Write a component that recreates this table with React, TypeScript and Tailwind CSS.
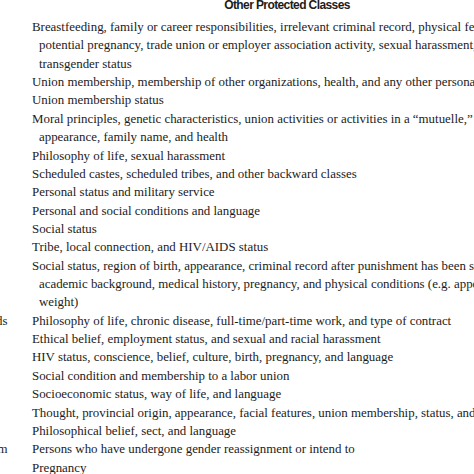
const rows: { country?: string; lines: string[] }[] = [
  { lines: ['Breastfeeding, family or career responsibilities, irrelevant criminal record, physical features,', 'potential pregnancy, trade union or employer association activity, sexual harassment, and', 'transgender status'] },
  { lines: ['Union membership, membership of other organizations, health, and any other personal'] },
  { lines: ['Union membership status'] },
  { lines: ['Moral principles, genetic characteristics, union activities or activities in a \u201cmutuelle,\u201d', 'appearance, family name, and health'] },
  { lines: ['Philosophy of life, sexual harassment'] },
  { lines: ['Scheduled castes, scheduled tribes, and other backward classes'] },
  { lines: ['Personal status and military service'] },
  { lines: ['Personal and social conditions and language'] },
  { lines: ['Social status'] },
  { lines: ['Tribe, local connection, and HIV/AIDS status'] },
  { lines: ['Social status, region of birth, appearance, criminal record after punishment has been served,', 'academic background, medical history, pregnancy, and physical conditions (e.g. appearance,', 'weight)'] },
  { country: 'Netherlands', lines: ['Philosophy of life, chronic disease, full-time/part-time work, and type of contract'] },
  { lines: ['Ethical belief, employment status, and sexual and racial harassment'] },
  { lines: ['HIV status, conscience, belief, culture, birth, pregnancy, and language'] },
  { lines: ['Social condition and membership to a labor union'] },
  { lines: ['Socioeconomic status, way of life, and language'] },
  { lines: ['Thought, provincial origin, appearance, facial features, union membership, status, and wealth'] },
  { lines: ['Philosophical belief, sect, and language'] },
  { country: 'United Kingdom', lines: ['Persons who have undergone gender reassignment or intend to'] },
  { lines: ['Pregnancy'] },
];

export default function App() {
  return (
    <div className="w-[474px] h-[474px] overflow-hidden bg-white text-[#1c1c1c]">
      <div className="flex w-[620px]">
        <div className="w-[7.5px] shrink-0 overflow-hidden">
          <div className="h-[18px]" />
          {rows.map((r, i) => (
            <div key={i} className="flex justify-end" style={{ height: `${r.lines.length * 18.36}px` }}>
              <span className="whitespace-nowrap font-['Liberation_Serif',serif] text-[12.9px] leading-[18.36px]">{r.country ?? ''}</span>
            </div>
          ))}
        </div>
        <div className="ml-[24.5px] w-[510px] shrink-0">
          <div className="h-[18px] text-center font-['Liberation_Sans',sans-serif] font-bold text-[12px] leading-[11px] tracking-[-0.6px]">
            Other Protected Classes
          </div>
          {rows.map((r, i) => (
            <div key={i} className="font-['Liberation_Serif',serif] text-[12.9px] leading-[18.36px]">
              {r.lines.map((l, j) => (
                <div key={j} className={j > 0 ? 'pl-[7px] whitespace-nowrap' : 'whitespace-nowrap'}>{l}</div>
              ))}
            </div>
          ))}
        </div>
      </div>
    </div>
  );
}
